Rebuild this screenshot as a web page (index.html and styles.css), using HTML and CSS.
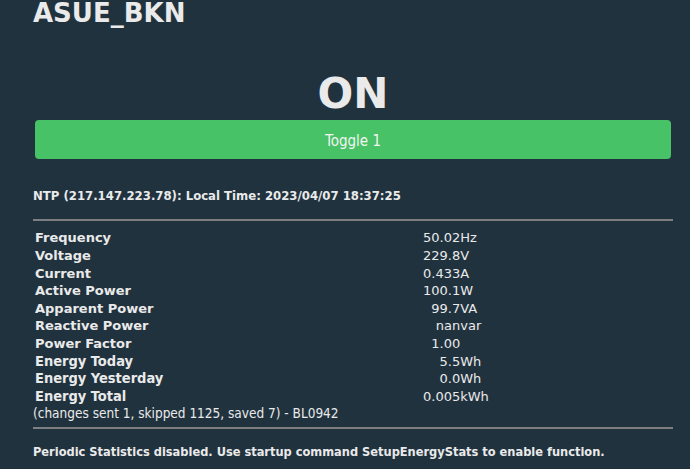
FILE: index.html
```html
<!DOCTYPE html>
<html>
<head>
<meta charset="utf-8">
<link rel="stylesheet" href="styles.css">
</head>
<body>
<div class="page">
  <h2 class="title">ASUE_BKN</h2>
  <div class="state">ON</div>
  <button class="toggle">Toggle 1</button>
  <div class="ntp">NTP (217.147.223.78): Local Time: 2023/04/07 18:37:25</div>
  <hr class="rule">
  <div class="table">
    <div class="lbl">Frequency</div><div class="num">50.02</div><div class="unit">Hz</div>
    <div class="lbl">Voltage</div><div class="num">229.8</div><div class="unit">V</div>
    <div class="lbl">Current</div><div class="num">0.433</div><div class="unit">A</div>
    <div class="lbl">Active Power</div><div class="num">100.1</div><div class="unit">W</div>
    <div class="lbl">Apparent Power</div><div class="num">99.7</div><div class="unit">VA</div>
    <div class="lbl">Reactive Power</div><div class="num">nan</div><div class="unit">var</div>
    <div class="lbl">Power Factor</div><div class="num">1.00</div><div class="unit"></div>
    <div class="lbl narrow">Energy Today</div><div class="num">5.5</div><div class="unit">Wh</div>
    <div class="lbl narrow">Energy Yesterday</div><div class="num">0.0</div><div class="unit">Wh</div>
    <div class="lbl narrow">Energy Total</div><div class="num">0.005</div><div class="unit">kWh</div>
  </div>
  <div class="changes">(changes sent 1, skipped 1125, saved 7) - BL0942</div>
  <hr class="rule rule2">
  <div class="stats">Periodic Statistics disabled. Use startup command SetupEnergyStats to enable function.</div>
</div>
</body>
</html>
```
FILE: styles.css
```css
html, body {
  margin: 0;
  padding: 0;
  background: #21323f;
  height: 100%;
}
body {
  color: #eaeaea;
  font-family: "DejaVu Sans", Verdana, sans-serif;
  overflow: hidden;
}
.page {
  margin-left: 33px;
  width: 640px;
  display: flex;
  flex-direction: column;
}
.title {
  margin: 0;
  font-size: 26px;
  line-height: 27px;
  font-weight: bold;
}
.state {
  margin-top: 45.5px;
  font-size: 42px;
  line-height: 42px;
  font-weight: bold;
  text-align: center;
}
.toggle {
  margin: 5.5px 2px 0 2px;
  height: 39px;
  border: 0;
  border-radius: 4px;
  background: #47c266;
  color: #f4f4f4;
  font-family: "DejaVu Sans Condensed", "DejaVu Sans", sans-serif;
  font-size: 15px;
  padding: 2px 0 0 0;
}
.ntp {
  margin-top: 30px;
  font-family: "DejaVu Sans Condensed", "DejaVu Sans", sans-serif;
  font-weight: bold;
  font-size: 13px;
  line-height: 14px;
}
.rule {
  margin: 16px 0 0 0;
  border: 0;
  height: 2px;
  background: #7e7f80;
}
.table {
  margin-top: 8.4px;
  display: grid;
  grid-template-columns: 390px max-content 1fr;
  font-size: 13px;
  line-height: 17.6px;
}
.lbl {
  font-weight: bold;
  padding-left: 2px;
}
.lbl.narrow {
  font-family: "DejaVu Sans Condensed", "DejaVu Sans", sans-serif;
  font-size: 14.5px;
}
.num {
  text-align: right;
}
.changes {
  font-family: "DejaVu Sans Condensed", "DejaVu Sans", sans-serif;
  font-size: 13.5px;
  line-height: 17px;
}
.rule2 {
  margin-top: 5px;
}
.stats {
  margin-top: 16px;
  font-family: "DejaVu Sans Condensed", "DejaVu Sans", sans-serif;
  font-weight: bold;
  font-size: 12.7px;
  line-height: 14px;
}
```
